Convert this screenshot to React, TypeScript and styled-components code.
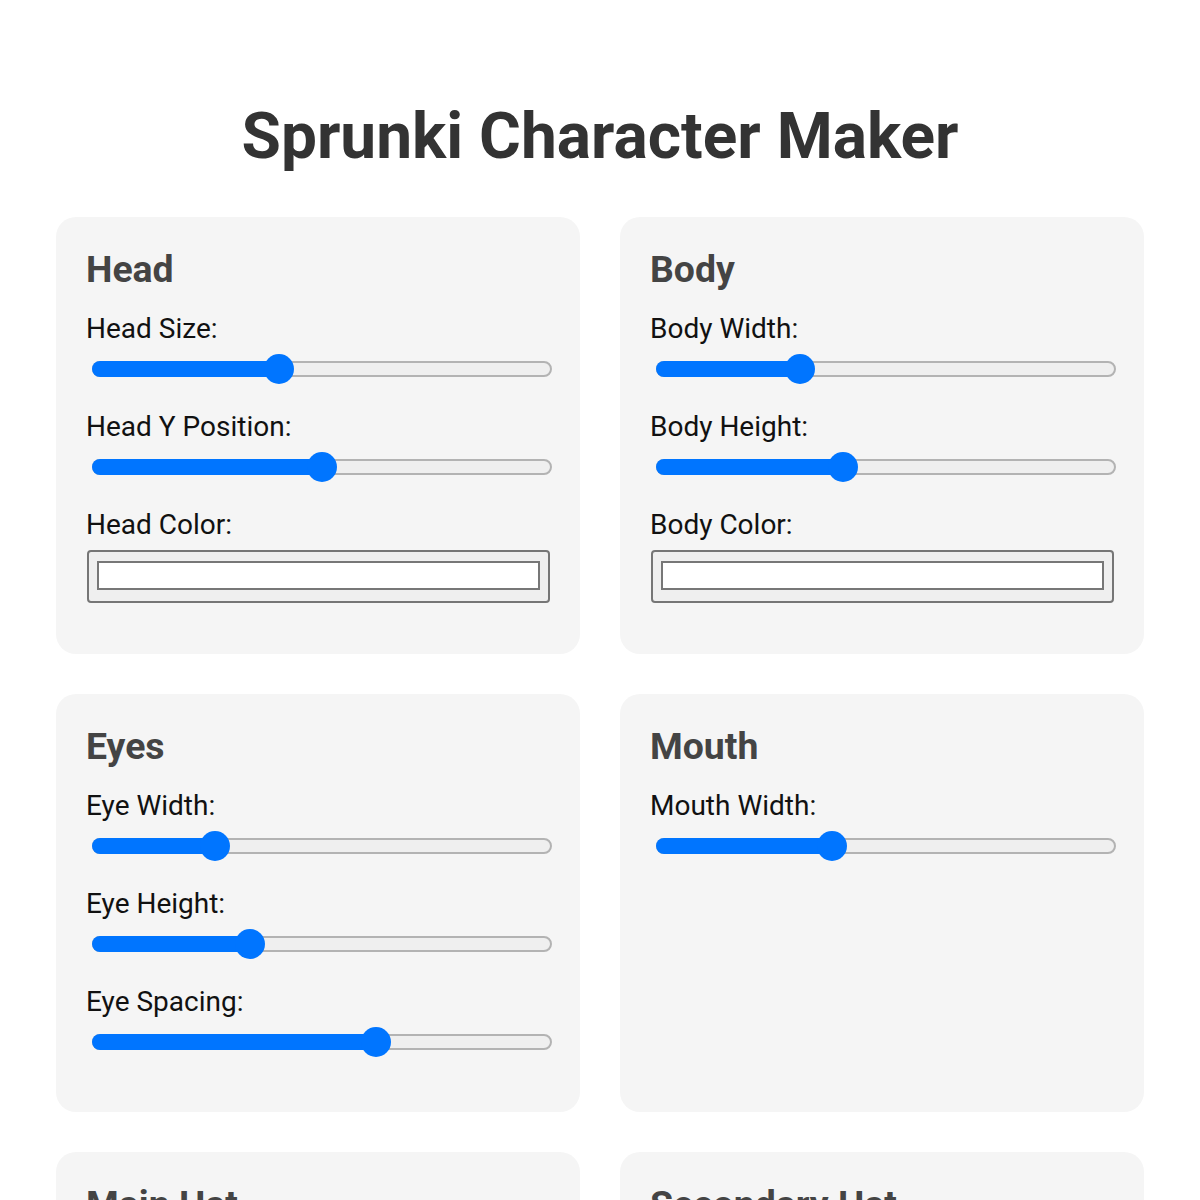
import { useState } from "react";
import styled, { createGlobalStyle } from "styled-components";

const GlobalStyle = createGlobalStyle`
  body {
    margin: 0;
    background: #ffffff;
    font-family: Roboto, "Liberation Sans", Arial, sans-serif;
  }
  * {
    box-sizing: border-box;
  }
`;

interface SliderProps {
  min?: number;
  max?: number;
  initial: number;
}

const THUMB = 30;

const Slider = ({ min = 0, max = 100, initial }: SliderProps) => {
  const [value, setValue] = useState(initial);
  const frac = (value - min) / (max - min);
  // thumb centre, same maths as a native range input
  const centre = `calc(${THUMB / 2}px + (100% - ${THUMB}px) * ${frac})`;

  return (
    <SliderBox>
      <Track />
      <Fill style={{ width: centre }} />
      <Thumb style={{ left: `calc(${centre} - ${THUMB / 2}px)` }} />
      <HiddenRange
        type="range"
        min={min}
        max={max}
        step="any"
        value={value}
        onChange={(e) => setValue(Number(e.target.value))}
      />
    </SliderBox>
  );
};

type Control =
  | { kind: "range"; label: string; value: number }
  | { kind: "color"; label: string; value: string };

interface SectionProps {
  title: string;
  controls: Control[];
}

const Section = ({ title, controls }: SectionProps) => {
  return (
    <Card>
      <CardTitle>{title}</CardTitle>
      {controls.map((c) => (
        <Field key={c.label}>
          <Label>{c.label}</Label>
          {c.kind === "range" ? (
            <Slider initial={c.value} />
          ) : (
            <ColorInput type="color" defaultValue={c.value} />
          )}
        </Field>
      ))}
    </Card>
  );
};

const sections: SectionProps[] = [
  {
    title: "Head",
    controls: [
      { kind: "range", label: "Head Size:", value: 40 },
      { kind: "range", label: "Head Y Position:", value: 50 },
      { kind: "color", label: "Head Color:", value: "#ffffff" },
    ],
  },
  {
    title: "Body",
    controls: [
      { kind: "range", label: "Body Width:", value: 30 },
      { kind: "range", label: "Body Height:", value: 40 },
      { kind: "color", label: "Body Color:", value: "#ffffff" },
    ],
  },
  {
    title: "Eyes",
    controls: [
      { kind: "range", label: "Eye Width:", value: 25 },
      { kind: "range", label: "Eye Height:", value: 33.3 },
      { kind: "range", label: "Eye Spacing:", value: 62.5 },
    ],
  },
  {
    title: "Mouth",
    controls: [{ kind: "range", label: "Mouth Width:", value: 37.5 }],
  },
  {
    title: "Main Hat",
    controls: [
      { kind: "range", label: "Hat Size:", value: 50 },
      { kind: "range", label: "Hat Y Position:", value: 50 },
      { kind: "color", label: "Hat Color:", value: "#ffffff" },
    ],
  },
  {
    title: "Secondary Hat",
    controls: [
      { kind: "range", label: "Hat Size:", value: 50 },
      { kind: "range", label: "Hat Y Position:", value: 50 },
      { kind: "color", label: "Hat Color:", value: "#ffffff" },
    ],
  },
];

const App = () => {
  return (
    <>
      <GlobalStyle />
      <Page>
        <Title>Sprunki Character Maker</Title>
        <Grid>
          {sections.map((s) => (
            <Section key={s.title} {...s} />
          ))}
        </Grid>
      </Page>
    </>
  );
};

export default App;

const Page = styled.div`
  padding: 56px;
`;

const Title = styled.h1`
  margin: 43px 0;
  text-align: center;
  font-size: 64px;
  font-weight: 700;
  line-height: 75px;
  color: #333333;
`;

const Grid = styled.div`
  display: grid;
  grid-template-columns: 1fr 1fr;
  gap: 40px;
`;

const Card = styled.div`
  padding: 30px 30px 29px;
  background-color: #f5f5f5;
  border-radius: 20px;
`;

const CardTitle = styled.h3`
  margin: 0 0 21px;
  font-size: 37.4px;
  font-weight: 700;
  line-height: 44px;
  color: #444444;
`;

const Field = styled.div`
  display: flex;
  flex-direction: column;
  margin-bottom: 21px;
`;

const Label = styled.label`
  display: block;
  margin-bottom: 4px;
  font-size: 28px;
  line-height: 33px;
  color: #111111;
`;

const SliderBox = styled.div`
  position: relative;
  height: 32px;
  margin: 4px -2px 4px 6px;
  display: flex;
  align-items: center;
`;

const Track = styled.div`
  width: 100%;
  height: 16px;
  background-color: #efefef;
  border: 2px solid #b3b3b3;
  border-radius: 8px;
`;

const Fill = styled.div`
  position: absolute;
  left: 0;
  top: 8px;
  height: 16px;
  background-color: #0075ff;
  border-radius: 8px 0 0 8px;
`;

const Thumb = styled.div`
  position: absolute;
  top: 1px;
  width: ${THUMB}px;
  height: ${THUMB}px;
  border-radius: 50%;
  background-color: #0075ff;
`;

const HiddenRange = styled.input`
  position: absolute;
  inset: 0;
  width: 100%;
  height: 100%;
  margin: 0;
  opacity: 0;
  cursor: pointer;
`;

const ColorInput = styled.input`
  -webkit-appearance: none;
  appearance: none;
  width: calc(100% - 1px);
  height: 53px;
  margin: 5px 0 1px 1px;
  padding: 9px 8px 11px;
  background-color: #efefef;
  border: 2px solid #767676;
  border-radius: 4px;
  cursor: pointer;

  &::-webkit-color-swatch-wrapper {
    padding: 0;
  }
  &::-webkit-color-swatch {
    border: 2px solid #777777;
    border-radius: 0;
  }
`;
